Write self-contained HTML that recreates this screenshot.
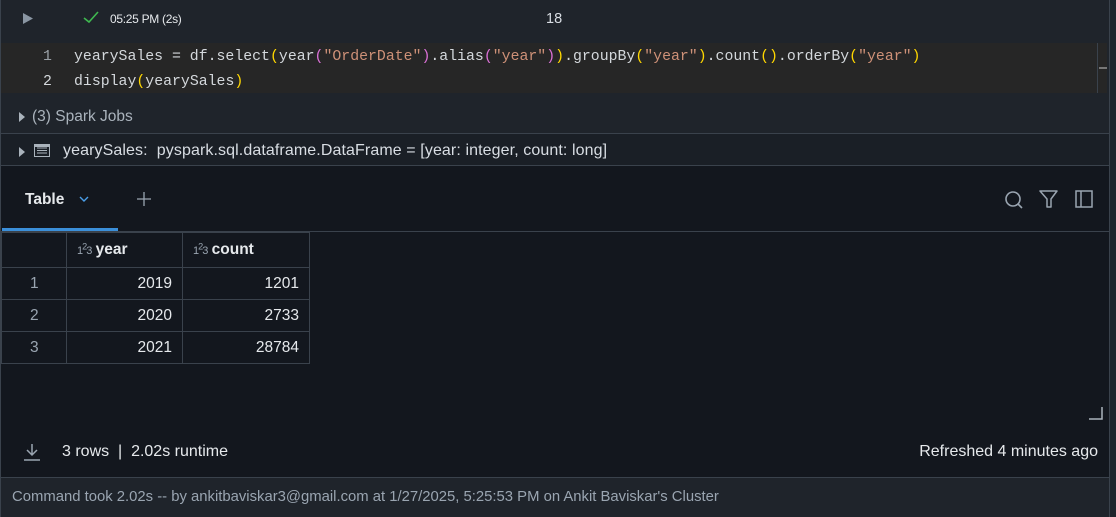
<!DOCTYPE html>
<html><head><meta charset="utf-8"><style>
*{margin:0;padding:0;box-sizing:border-box}
body{width:1116px;height:517px;overflow:hidden;background:#1f242b;font-family:"Liberation Sans",Arial,sans-serif;position:relative;color:#d8dde3}
.a{position:absolute;white-space:nowrap}
.code{font-family:"Liberation Mono",monospace;font-size:14.85px;color:#d4d8dc}
.s{color:#ce9178}.p{color:#ffd700}.pp{color:#da70d6}
.res{position:absolute;left:1px;top:166px;width:1108px;height:311px;background:#13171e}
td{border:1px solid #3a424c;font-size:15.5px;color:#e6e9ec;height:32px;padding:0 10px}
table{border-collapse:collapse;position:absolute;left:1px;top:232px}
.n{font-size:11px;color:#9aa5b1;font-weight:normal;letter-spacing:-1px}
</style></head><body>
<div style="position:absolute;left:0;top:0;width:1px;height:517px;background:#3a424c"></div>
<div style="position:absolute;left:1109px;top:0;width:1px;height:517px;background:#3a424c"></div>
<svg class="a" style="left:22px;top:12px" width="12" height="13"><path d="M1 1L11 6.5L1 12Z" fill="#8a96a3"/></svg>
<svg class="a" style="left:83px;top:11px" width="16" height="13"><path d="M1 7L6 11L15 1" stroke="#3fb950" stroke-width="1.6" fill="none"/></svg>
<div class="a" style="left:110px;top:12px;font-size:12px;color:#e6e9ec;letter-spacing:-0.3px">05:25 PM (2s)</div>
<div class="a" style="left:546px;top:11px;font-size:14.5px;color:#d8dde3">18</div>
<div style="position:absolute;left:1px;top:43px;width:1106px;height:50px;background:#262626"></div>
<div style="position:absolute;left:1097px;top:43px;width:1px;height:50px;background:#3a424c"></div>
<div style="position:absolute;left:1099px;top:67px;width:8px;height:2px;background:#777"></div>
<div class="a code" style="left:43px;top:49px;color:#9aa0a6">1</div>
<div class="a code" style="left:43px;top:74px;color:#d4d8dc">2</div>
<div class="a code" style="left:74px;top:49px">yearySales = df.select<span class="p">(</span>year<span class="pp">(</span><span class="s">"OrderDate"</span><span class="pp">)</span>.alias<span class="pp">(</span><span class="s">"year"</span><span class="pp">)</span><span class="p">)</span>.groupBy<span class="p">(</span><span class="s">"year"</span><span class="p">)</span>.count<span class="p">()</span>.orderBy<span class="p">(</span><span class="s">"year"</span><span class="p">)</span></div>
<div class="a code" style="left:74px;top:74px">display<span class="p">(</span>yearySales<span class="p">)</span></div>
<svg class="a" style="left:19px;top:112px" width="6" height="10"><path d="M0 0L6 5L0 10Z" fill="#aab3bc"/></svg>
<div class="a" style="left:32px;top:108px;font-size:15.5px;color:#aab3bc">(3) Spark Jobs</div>
<div style="position:absolute;left:1px;top:133px;width:1108px;height:33px;background:#1a1f26;border-top:1px solid #3a424c;border-bottom:1px solid #3a424c"></div>
<svg class="a" style="left:19px;top:147px" width="6" height="10"><path d="M0 0L6 5L0 10Z" fill="#aab3bc"/></svg>
<svg class="a" style="left:34px;top:144px" width="16" height="13"><rect x="0.5" y="0.5" width="15" height="12" fill="none" stroke="#aab3bc"/><path d="M3 4H13M3 6.5H13M3 9H13" stroke="#aab3bc"/><rect x="0.5" y="0.5" width="15" height="2.5" fill="#aab3bc"/></svg>
<div class="a" style="left:63px;top:142px;font-size:16px;letter-spacing:0.1px;color:#d8dde3">yearySales:&nbsp; pyspark.sql.dataframe.DataFrame = [year: integer, count: long]</div>
<div class="res"></div>
<div class="a" style="left:25px;top:191px;font-size:15.5px;font-weight:bold;color:#e6e9ec">Table</div>
<svg class="a" style="left:79px;top:196px" width="10" height="6"><path d="M1 1L5 5L9 1" stroke="#4a9ee8" stroke-width="1.4" fill="none"/></svg>
<svg class="a" style="left:137px;top:192px" width="14" height="14"><path d="M7 0V14M0 7H14" stroke="#9aa5b1" stroke-width="1.3"/></svg>
<div style="position:absolute;left:2px;top:228px;width:116px;height:3px;background:#3b8fd9"></div>
<div style="position:absolute;left:1px;top:231px;width:1108px;height:1px;background:#3a424c"></div>
<svg class="a" style="left:1004px;top:190px" width="20" height="20"><circle cx="9" cy="9" r="7" stroke="#9aa5b1" stroke-width="1.6" fill="none"/><path d="M14 14L18 18" stroke="#9aa5b1" stroke-width="1.6"/></svg>
<svg class="a" style="left:1039px;top:190px" width="20" height="19"><path d="M1 1H18L12 9V17H8V9Z" stroke="#9aa5b1" stroke-width="1.5" fill="none" stroke-linejoin="round"/></svg>
<svg class="a" style="left:1075px;top:190px" width="18" height="18"><rect x="1" y="1" width="16" height="16" stroke="#9aa5b1" stroke-width="1.5" fill="none"/><path d="M6 1V17" stroke="#9aa5b1" stroke-width="1.5"/></svg>
<table>
<tr style="height:35px"><td style="width:65px"></td><td style="width:116px;font-weight:bold"><span class="n">1<sup>2</sup>3</span> year</td><td style="width:127px;font-weight:bold"><span class="n">1<sup>2</sup>3</span> count</td></tr>
<tr><td style="color:#9aa5b1;padding-left:28px">1</td><td style="text-align:right">2019</td><td style="text-align:right">1201</td></tr>
<tr><td style="color:#9aa5b1;padding-left:28px">2</td><td style="text-align:right">2020</td><td style="text-align:right">2733</td></tr>
<tr><td style="color:#9aa5b1;padding-left:28px">3</td><td style="text-align:right">2021</td><td style="text-align:right">28784</td></tr>
</table>
<svg class="a" style="left:1089px;top:407px" width="14" height="13"><path d="M13 0V12H0" stroke="#aab3bc" stroke-width="1.5" fill="none"/></svg>
<svg class="a" style="left:23px;top:443px" width="18" height="18"><path d="M9 1V12M4 7L9 12L14 7M1 17H17" stroke="#9aa5b1" stroke-width="1.5" fill="none"/></svg>
<div class="a" style="left:62px;top:443px;font-size:16px;color:#e6e9ec">3 rows &nbsp;|&nbsp; 2.02s runtime</div>
<div class="a" style="right:18px;top:443px;font-size:16px;color:#e6e9ec">Refreshed 4 minutes ago</div>
<div style="position:absolute;left:1px;top:477px;width:1108px;height:1px;background:#3a424c"></div>
<div class="a" style="left:12px;top:489px;font-size:14.85px;color:#9aa5b1">Command took 2.02s -- by ankitbaviskar3@gmail.com at 1/27/2025, 5:25:53 PM on Ankit Baviskar's Cluster</div>
</body></html>
